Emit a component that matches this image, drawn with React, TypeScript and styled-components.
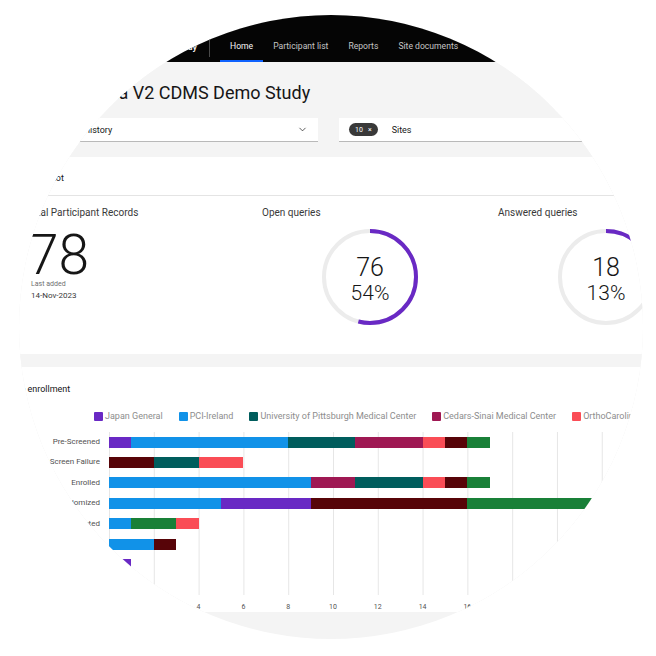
import React from "react";
import styled, { createGlobalStyle } from "styled-components";
import { ChevronDown } from "lucide-react";

const GlobalStyle = createGlobalStyle`
  html, body { margin: 0; padding: 0; background: #ffffff; }
  body { font-family: Roboto, "Liberation Sans", sans-serif; }
  * { box-sizing: border-box; }
`;

const UNIT = 22.4;

const Lens = styled.div`
  width: 656px;
  height: 656px;
  overflow: hidden;
  clip-path: circle(312px at 331px 327px);
  background: #f4f4f4;
`;

const Dashboard = styled.div`
  width: 656px;
  display: flex;
  flex-direction: column;
  background: #f4f4f4;
`;

const Header = styled.header`
  height: 62px;
  background: #050505;
  display: flex;
  align-items: flex-end;
`;

const Brand = styled.div`
  width: 210px;
  height: 20px;
  margin-bottom: 5px;
  padding-right: 12px;
  border-right: 1px solid #4a4a4a;
  display: flex;
  align-items: center;
  justify-content: flex-end;
  color: #f4f4f4;
  font-size: 9px;
  white-space: nowrap;
  b { font-weight: 600; margin-left: 3px; }
`;

const Nav = styled.nav`
  display: flex;
  margin-left: 10px;
`;

const NavItem = styled.div<{ $active?: boolean }>`
  height: 30px;
  padding: 0 10px;
  line-height: 29px;
  font-size: 8.6px;
  color: ${(p) => (p.$active ? "#f4f4f4" : "#c6c6c6")};
  border-bottom: 2px solid ${(p) => (p.$active ? "#0f62fe" : "transparent")};
  white-space: nowrap;
`;

const Main = styled.section`
  padding: 20px 25px 15px 26px;
  display: flex;
  flex-direction: column;
  gap: 14px;
`;

const Title = styled.h1`
  margin: 0;
  padding-left: 62px;
  font-size: 18px;
  line-height: 22px;
  font-weight: 400;
  color: #161616;
  white-space: nowrap;
`;

const Filters = styled.div`
  display: grid;
  grid-template-columns: 292px 292px;
  gap: 21px;
`;

const Field = styled.div<{ $pad: number }>`
  height: 24px;
  background: #ffffff;
  border-bottom: 1px solid #b9b9b9;
  display: flex;
  align-items: center;
  padding: 0 10px 0 ${(p) => p.$pad}px;
  font-size: 9px;
  color: #161616;
  white-space: nowrap;
`;

const FieldText = styled.span`
  flex: 1;
`;

const Tag = styled.span`
  height: 13px;
  padding: 0 6px;
  border-radius: 7px;
  background: #393939;
  color: #ffffff;
  font-size: 7px;
  display: inline-flex;
  align-items: center;
  gap: 5px;
  margin-right: 14px;
`;

const Panel = styled.section`
  background: #ffffff;
`;

const SnapshotPanel = styled(Panel)`
  padding-bottom: 29px;
`;

const PanelHeading = styled.div`
  padding: 16px 26px 11px;
  font-size: 9px;
  line-height: 11px;
  color: #161616;
  border-bottom: 1px solid #e4e4e4;
`;

const KpiGrid = styled.div`
  padding: 11px 26px 0;
  display: grid;
  grid-template-columns: 236px 236px 1fr;
`;

const Kpi = styled.div`
  display: flex;
  flex-direction: column;
`;

const KpiLabel = styled.div`
  font-size: 10px;
  line-height: 12px;
  color: #393939;
  white-space: nowrap;
`;

const BigNumber = styled.div`
  margin-top: 12px;
  margin-left: 2px;
  font-size: 55px;
  line-height: 48px;
  font-weight: 300;
  color: #161616;
`;

const Muted = styled.div`
  margin-top: 1px;
  margin-left: 5px;
  font-size: 7px;
  line-height: 9px;
  color: #6f6f6f;
`;

const DateText = styled.div`
  margin-top: 1px;
  margin-left: 5px;
  font-size: 8px;
  line-height: 11px;
  color: #393939;
`;

const DonutWrap = styled.div`
  margin-top: 10px;
  margin-left: 60px;
  width: 96px;
  height: 96px;
  display: grid;
  & > * { grid-area: 1 / 1; }
`;

const DonutText = styled.div`
  align-self: center;
  justify-self: center;
  padding-top: 6px;
  text-align: center;
  color: #161616;
  font-weight: 300;
`;

const DonutValue = styled.div`
  font-size: 25px;
  line-height: 24px;
`;

const DonutPct = styled.div`
  margin-top: 2px;
  font-size: 21px;
  line-height: 22px;
`;

const ChartPanel = styled(Panel)`
  margin-top: 13px;
  padding-top: 17px;
`;

const ChartTitle = styled.div`
  padding-left: 10px;
  font-size: 9px;
  line-height: 11px;
  color: #161616;
  white-space: nowrap;
`;

const Legend = styled.div`
  margin-top: 15px;
  padding-left: 94px;
  display: flex;
  gap: 16px;
  height: 12px;
  overflow: hidden;
  white-space: nowrap;
`;

const LegendItem = styled.div`
  display: flex;
  align-items: center;
  font-size: 9px;
  line-height: 12px;
  color: #8d8d8d;
  flex: none;
`;

const Swatch = styled.span<{ $color: string }>`
  width: 9px;
  height: 9px;
  border-radius: 1px;
  margin-right: 2px;
  background: ${(p) => p.$color};
`;

const ChartBody = styled.div`
  margin-top: 10px;
  display: grid;
  grid-template-columns: 109px ${24 * UNIT}px;
  grid-auto-rows: 20.4px;
`;

const CategoryLabel = styled.div`
  padding-right: 9px;
  text-align: right;
  font-size: 8px;
  line-height: 20.4px;
  color: #525252;
  white-space: nowrap;
`;

const Track = styled.div`
  display: flex;
  align-items: center;
  background-image: linear-gradient(to right, #e6e6e6 1px, transparent 1px);
  background-size: ${2 * UNIT}px 100%;
`;

const Bar = styled.div`
  display: flex;
  height: 11px;
`;

const Segment = styled.span<{ $color: string; $units: number }>`
  width: ${(p) => p.$units * UNIT}px;
  height: 100%;
  background: ${(p) => p.$color};
`;

const Axis = styled.div`
  margin-top: 7px;
  margin-left: ${109 - UNIT}px;
  display: flex;
`;

const Tick = styled.span`
  width: ${2 * UNIT}px;
  flex: none;
  text-align: center;
  font-size: 7px;
  line-height: 10px;
  color: #525252;
`;

const sites = {
  J: { name: "Japan General", color: "#6929c4" },
  P: { name: "PCI-Ireland", color: "#1192e8" },
  U: { name: "University of Pittsburgh Medical Center", color: "#005d5d" },
  C: { name: "Cedars-Sinai Medical Center", color: "#9f1853" },
  O: { name: "OrthoCarolina", color: "#fa4d56" },
  M: { name: "Mayo Clinic", color: "#570408" },
  G: { name: "Guy's Hospital", color: "#198038" },
} as const;

type SiteKey = keyof typeof sites;

const rows: { label: string; parts: [SiteKey, number][] }[] = [
  { label: "Pre-Screened", parts: [["J", 1], ["P", 7], ["U", 3], ["C", 3], ["O", 1], ["M", 1], ["G", 1]] },
  { label: "Screen Failure", parts: [["M", 2], ["U", 2], ["O", 2]] },
  { label: "Enrolled", parts: [["P", 9], ["C", 2], ["U", 3], ["O", 1], ["M", 1], ["G", 1]] },
  { label: "Randomized", parts: [["P", 5], ["J", 4], ["M", 7], ["G", 8]] },
  { label: "Completed", parts: [["P", 1], ["G", 2], ["O", 1]] },
  { label: "Withdrawn", parts: [["P", 2], ["M", 1]] },
  { label: "Discontinued", parts: [["J", 1]] },
  { label: "Lost to follow-up", parts: [] },
];

const ticks = [0, 2, 4, 6, 8, 10, 12, 14, 16, 18, 20, 22, 24];

function Donut({ value, pct }: { value: number; pct: number }) {
  const r = 46;
  const c = 2 * Math.PI * r;
  return (
    <DonutWrap>
      <svg width="96" height="96" viewBox="0 0 96 96">
        <circle cx="48" cy="48" r={r} fill="none" stroke="#ececec" strokeWidth="4" />
        <circle
          cx="48"
          cy="48"
          r={r}
          fill="none"
          stroke="#6929c4"
          strokeWidth="4"
          strokeDasharray={`${(c * pct) / 100} ${c}`}
          transform="rotate(-90 48 48)"
        />
      </svg>
      <DonutText>
        <DonutValue>{value}</DonutValue>
        <DonutPct>{pct}%</DonutPct>
      </DonutText>
    </DonutWrap>
  );
}

export default function App() {
  return (
    <>
      <GlobalStyle />
      <Lens>
        <Dashboard>
          <Header>
            <Brand>
              Zelta<b>Study</b>
            </Brand>
            <Nav>
              <NavItem $active>Home</NavItem>
              <NavItem>Participant list</NavItem>
              <NavItem>Reports</NavItem>
              <NavItem>Site documents</NavItem>
            </Nav>
          </Header>
          <Main>
            <Title>Zelta V2 CDMS Demo Study</Title>
            <Filters>
              <Field $pad={8}>
                <FieldText>Select study history</FieldText>
                <ChevronDown size={11} strokeWidth={1.5} color="#161616" />
              </Field>
              <Field $pad={10}>
                <Tag>
                  10 <span>×</span>
                </Tag>
                <FieldText>Sites</FieldText>
              </Field>
            </Filters>
          </Main>
          <SnapshotPanel>
            <PanelHeading>Snapshot</PanelHeading>
            <KpiGrid>
              <Kpi>
                <KpiLabel>Total Participant Records</KpiLabel>
                <BigNumber>78</BigNumber>
                <Muted>Last added</Muted>
                <DateText>14-Nov-2023</DateText>
              </Kpi>
              <Kpi>
                <KpiLabel>Open queries</KpiLabel>
                <Donut value={76} pct={54} />
              </Kpi>
              <Kpi>
                <KpiLabel>Answered queries</KpiLabel>
                <Donut value={18} pct={13} />
              </Kpi>
            </KpiGrid>
          </SnapshotPanel>
          <ChartPanel>
            <ChartTitle>Site enrollment</ChartTitle>
            <Legend>
              {(Object.keys(sites) as SiteKey[]).map((k) => (
                <LegendItem key={k}>
                  <Swatch $color={sites[k].color} />
                  {sites[k].name}
                </LegendItem>
              ))}
            </Legend>
            <ChartBody>
              {rows.map((row) => (
                <React.Fragment key={row.label}>
                  <CategoryLabel>{row.label}</CategoryLabel>
                  <Track>
                    <Bar>
                      {row.parts.map(([k, n], i) => (
                        <Segment key={i} $color={sites[k].color} $units={n} />
                      ))}
                    </Bar>
                  </Track>
                </React.Fragment>
              ))}
            </ChartBody>
            <Axis>
              {ticks.map((t) => (
                <Tick key={t}>{t}</Tick>
              ))}
            </Axis>
          </ChartPanel>
        </Dashboard>
      </Lens>
    </>
  );
}
